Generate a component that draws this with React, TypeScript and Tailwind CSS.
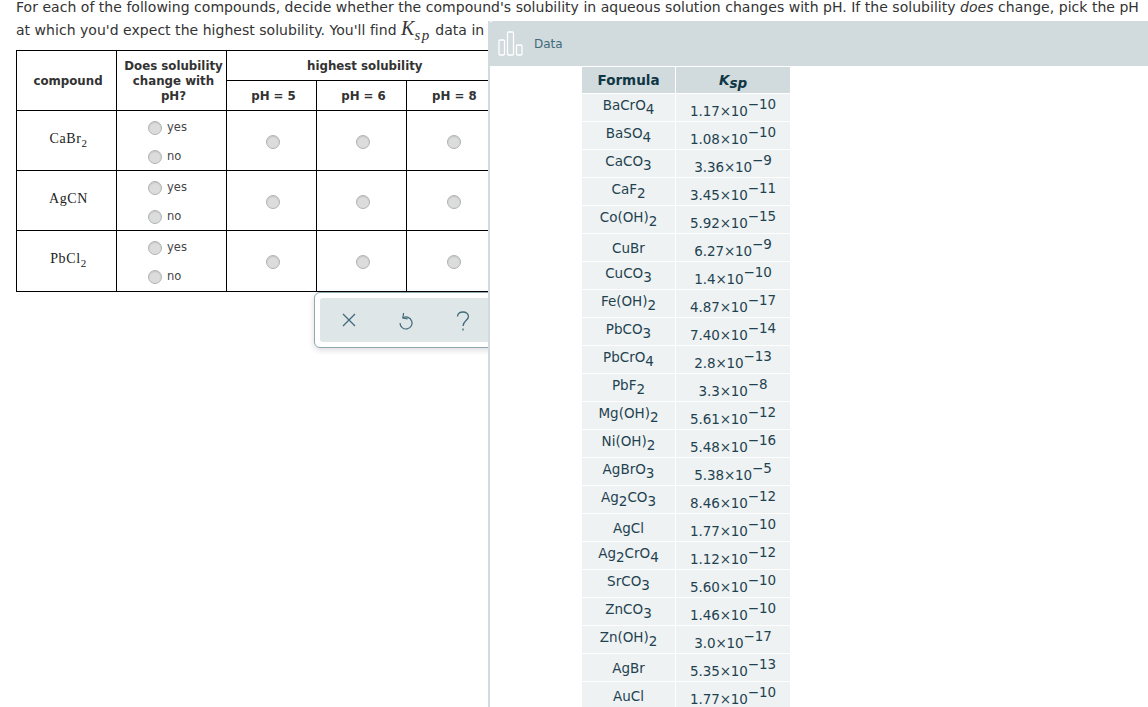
const sans = "font-['DejaVu_Sans',Verdana,sans-serif]";

function Radio() {
  return <span className="inline-block w-3.5 h-3.5 rounded-full bg-[#dcdcdc] border border-[#b0b4b5] shadow-[inset_0_1px_1px_#c4c4c4]" />;
}

function YesNo({ label }: { label: string }) {
  return (
    <div className="flex items-center gap-[5px] pl-[31px] h-[29px]">
      <Radio />
      <span className="text-[11.5px] text-[#444]">{label}</span>
    </div>
  );
}

function Row({ name, sub, tall }: { name: string; sub: string; tall?: boolean }) {
  const td = "border border-black text-center p-0 align-middle";
  return (
    <tr className={tall ? "h-[61px]" : "h-[60px]"}>
      <td className={td}>
        <span className="font-['Liberation_Serif',serif] text-[14px] tracking-[0.6px] text-[#222] relative top-[-3px] left-[2px]">
          {name}
          {sub && <sub className="text-[11px] relative top-[4px] align-baseline">{sub}</sub>}
        </span>
      </td>
      <td className={`${td} text-left`}>
        <div className="h-[59px] pt-[2px]">
          <YesNo label="yes" />
          <YesNo label="no" />
        </div>
      </td>
      <td className={td}><div className="flex justify-center pl-[2px] pt-[2px]"><Radio /></div></td>
      <td className={td}><div className="flex justify-center pl-[3px] pt-[2px]"><Radio /></div></td>
      <td className={td}><div className="flex justify-start pl-[40px] pt-[2px]"><Radio /></div></td>
    </tr>
  );
}

const data: [string, string, string, string, string][] = [
  ["BaCrO", "4", "", "1.17×10", "−10"],
  ["BaSO", "4", "", "1.08×10", "−10"],
  ["CaCO", "3", "", "3.36×10", "−9"],
  ["CaF", "2", "", "3.45×10", "−11"],
  ["Co(OH)", "2", "", "5.92×10", "−15"],
  ["CuBr", "", "", "6.27×10", "−9"],
  ["CuCO", "3", "", "1.4×10", "−10"],
  ["Fe(OH)", "2", "", "4.87×10", "−17"],
  ["PbCO", "3", "", "7.40×10", "−14"],
  ["PbCrO", "4", "", "2.8×10", "−13"],
  ["PbF", "2", "", "3.3×10", "−8"],
  ["Mg(OH)", "2", "", "5.61×10", "−12"],
  ["Ni(OH)", "2", "", "5.48×10", "−16"],
  ["AgBrO", "3", "", "5.38×10", "−5"],
  ["Ag", "2", "CO3", "8.46×10", "−12"],
  ["AgCl", "", "", "1.77×10", "−10"],
  ["Ag", "2", "CrO4", "1.12×10", "−12"],
  ["SrCO", "3", "", "5.60×10", "−10"],
  ["ZnCO", "3", "", "1.46×10", "−10"],
  ["Zn(OH)", "2", "", "3.0×10", "−17"],
  ["AgBr", "", "", "5.35×10", "−13"],
  ["AuCl", "", "", "1.77×10", "−10"],
];

function Sub({ children }: { children: React.ReactNode }) {
  return <span className="relative top-[4px]">{children}</span>;
}

function Formula({ a, b, c }: { a: string; b: string; c: string }) {
  const tail = c ? c.slice(0, -1) : "";
  const last = c ? c.slice(-1) : "";
  return (
    <span>
      {a}
      {b && <Sub>{b}</Sub>}
      {tail}
      {last && <Sub>{last}</Sub>}
    </span>
  );
}

export default function App() {
  const th = "border border-black text-center p-0 pt-[2px] font-bold text-[11.8px] leading-[15px] text-[#333]";
  return (
    <div className={`relative w-[1148px] h-[707px] overflow-hidden bg-white ${sans}`}>
      <div className="pl-4 text-[14px] leading-[20px] text-[#333] h-[50px] w-[1148px] whitespace-nowrap -mt-[3px] tracking-[0.03px]">
        <p>
          For each of the following compounds, decide whether the compound's solubility in aqueous solution changes with pH. If the solubility <i>does</i> change, pick the pH
        </p>
        <p className="mt-[1px]">
          at which you'd expect the highest solubility. You'll find{" "}
          <span className="font-['Liberation_Serif',serif] italic text-[20px]">
            K<sub className="text-[15px] relative top-[5px] align-baseline tracking-[1.5px]">sp</sub>
          </span>{" "}
          data in the
        </p>
      </div>
      <div className="pl-4 mt-[3px]">
        <table className="border-collapse table-fixed w-[510px]">
          <colgroup>
            <col className="w-[100px]" />
            <col className="w-[110px]" />
            <col className="w-[90px]" />
            <col className="w-[90px]" />
            <col className="w-[120px]" />
          </colgroup>
          <thead>
            <tr className="h-[30px]">
              <th rowSpan={2} className={`${th} pl-[3px]`}>compound</th>
              <th rowSpan={2} className={`${th} pl-[4px]`}>Does solubility<br />change with<br />pH?</th>
              <th colSpan={3} className={`${th} text-left pl-[80px]`}>highest solubility</th>
            </tr>
            <tr className="h-[30px]">
              <th className={`${th} pl-[4px]`}>pH = 5</th>
              <th className={`${th} pl-[4px]`}>pH = 6</th>
              <th className={`${th} text-left pl-[25px]`}>pH = 8</th>
            </tr>
          </thead>
          <tbody>
            <Row name="CaBr" sub="2" />
            <Row name="AgCN" sub="" />
            <Row name="PbCl" sub="2" tall />
          </tbody>
        </table>
      </div>

      <div className="absolute left-[314px] top-[292px] w-[200px] h-[56px] rounded-[6px] border border-[#8fa9b2] bg-white p-[5px] shadow-[0_2px_6px_rgba(0,0,0,0.15)]">
        <div className="h-full rounded-[3px] bg-[#dfe6e8] relative text-[#3f6b7a]">
          <svg className="absolute left-[22px] top-[15px]" width="14" height="14" viewBox="0 0 14 14" fill="none" stroke="currentColor" strokeWidth="1.3">
            <path d="M1 1 L13 13 M13 1 L1 13" />
          </svg>
          <svg className="absolute left-[79px] top-[12px]" width="15" height="20" viewBox="0 0 15 20" fill="none" stroke="currentColor" strokeWidth="1.2">
            <path d="M4 7.8 A6 6 0 1 1 1 13" />
            <path d="M4.6 3 L3.8 8 L8.6 8.8" />
          </svg>
          <svg className="absolute left-[136px] top-[13px]" width="14" height="22" viewBox="0 0 14 22" fill="none" stroke="currentColor" strokeWidth="1.3">
            <path d="M1.5 5.5 C1.5 2.5 4 1 7 1 C10 1 12.5 3 12.5 5.5 C12.5 9.5 7 9.5 7 15" />
            <path d="M7 17.5 V19.5" />
          </svg>
        </div>
      </div>

      <div className="absolute left-[488px] top-[21px] right-0 bottom-0 bg-white border-l-[2px] border-[#d1dadd]">
        <div className="h-[45px] bg-[#d1dadd] -ml-[2px] rounded-tl-[6px] flex items-center">
          <svg className="ml-[10px]" width="26" height="26" viewBox="0 0 26 26" fill="none" stroke="#fff" strokeWidth="1.3">
            <rect x="1" y="9" width="5.5" height="15" rx="1" />
            <rect x="9.5" y="1" width="6" height="23" rx="1" />
            <rect x="18.5" y="14" width="5.5" height="10" rx="1" />
          </svg>
          <span className="ml-[10px] text-[12px] text-[#3f6b7a]">Data</span>
        </div>
        <div className="ml-[92px] mt-[1px] w-[208px] text-[#1f4250] text-[13.5px]">
          <div className="flex h-[26px] bg-[#d1dadd] items-center font-bold">
            <div className="w-[93px] text-center text-[13.5px] text-[#0f3644]">Formula</div>
            <div className="w-px h-full bg-white" />
            <div className="flex-1 text-center text-[#0f3644] italic">
              K<span className="relative top-[3px]">sp</span>
            </div>
          </div>
          {data.map(([a, b, c, v, e]) => (
            <div key={a + b + c} className="flex h-[27px] mt-px bg-[#eef2f3] leading-[20px]">
              <div className={`w-[93px] text-center whitespace-nowrap ${b ? "pt-[1px]" : "pt-[4px]"}`}>
                <Formula a={a} b={b} c={c} />
              </div>
              <div className="w-px bg-white" />
              <div className="flex-1 text-center pt-[7px] whitespace-nowrap tracking-[-0.1px]">
                {v}
                <span className="relative top-[-7px]">{e}</span>
              </div>
            </div>
          ))}
        </div>
      </div>
    </div>
  );
}
